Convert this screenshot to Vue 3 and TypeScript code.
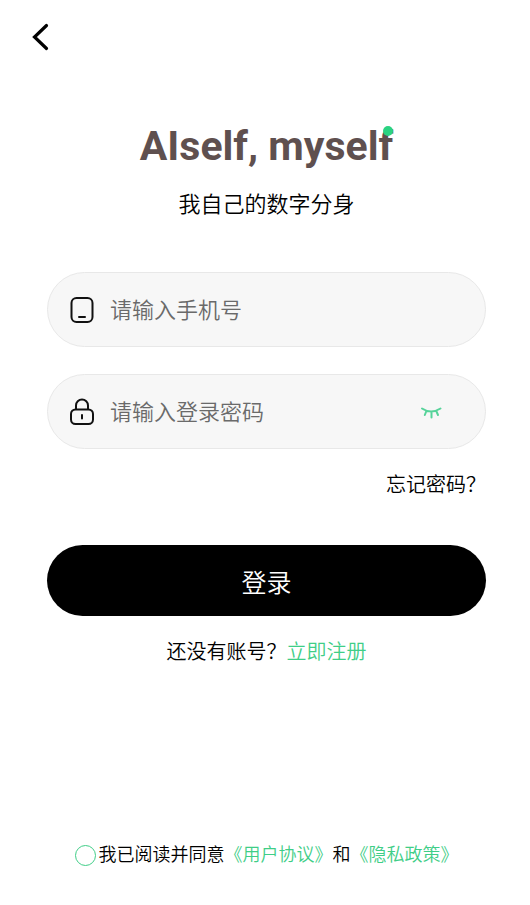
<script setup lang="ts">
import { ref } from 'vue'

const phone = ref('')
const password = ref('')
const showPassword = ref(false)
const agreed = ref(false)
</script>

<template>
  <main class="page">
    <header class="bar">
      <button class="icon-button" type="button" aria-label="返回">
        <svg width="20" height="30" viewBox="0 0 20 30" fill="none" stroke="#000" stroke-width="3.200" stroke-linecap="round" stroke-linejoin="miter">
          <path d="M16.500 3.500 4.500 15 16.500 26.500" />
        </svg>
      </button>
    </header>

    <section class="brand">
      <h1 class="title">AIself, myself<span class="dot"></span></h1>
      <p class="subtitle">我自己的数字分身</p>
    </section>

    <form class="form" @submit.prevent>
      <div class="field">
        <svg class="field-icon" width="26" height="28" viewBox="0 0 26 28" fill="none" stroke="#111" stroke-width="2" stroke-linecap="round">
          <rect x="2.500" y="2" width="21" height="24" rx="5" />
          <path d="M10 21h6" />
        </svg>
        <input v-model="phone" type="tel" placeholder="请输入手机号" aria-label="手机号" />
      </div>

      <div class="field">
        <svg class="field-icon" width="26" height="28" viewBox="0 0 26 28" fill="none" stroke="#111" stroke-width="2" stroke-linecap="round">
          <rect x="2" y="11.500" width="22" height="14.500" rx="4.500" />
          <path d="M7 11V7.500a6 6 0 0 1 12 0V11M13 17v3.500" />
        </svg>
        <input v-model="password" :type="showPassword ? 'text' : 'password'" placeholder="请输入登录密码" aria-label="登录密码" />
        <button class="icon-button" type="button" aria-label="显示密码" @click="showPassword = !showPassword">
          <svg width="22" height="14" viewBox="0 0 22 14" fill="none" stroke="#56d39a" stroke-width="2" stroke-linecap="round">
            <path d="M2 3.500Q11 9.500 20.500 3.500M6.200 6.500 4.800 10M11.500 7v5.500M16.500 6.500 18 10" />
          </svg>
        </button>
      </div>

      <a class="forgot" href="#">忘记密码？</a>
      <button class="submit" type="submit">登录</button>
      <p class="register">还没有账号？<a class="accent" href="#">立即注册</a></p>
    </form>

    <footer class="agreement">
      <input id="agree" v-model="agreed" type="checkbox" />
      <label for="agree">我已阅读并同意</label>
      <a class="accent" href="#">《用户协议》</a>
      <span>和</span>
      <a class="accent" href="#">《隐私政策》</a>
    </footer>
  </main>
</template>

<style>
body {
  margin: 0;
  background: #fff;
}
</style>

<style scoped>
.page {
  box-sizing: border-box;
  min-height: 100vh;
  display: flex;
  flex-direction: column;
  padding: 22px 44px 37px 47px;
  color: #000;
  background: #fff;
  font-family: Roboto, "Noto Sans CJK SC", sans-serif;
  font-weight: 350;
}

a {
  color: inherit;
  text-decoration: none;
}

button,
input {
  font: inherit;
}

.bar {
  display: flex;
  margin-left: -17px;
}

.icon-button {
  display: flex;
  padding: 0;
  border: 0;
  background: none;
  cursor: pointer;
}

.brand {
  display: flex;
  flex-direction: column;
  align-items: center;
  margin-top: 70px;
}

.title {
  position: relative;
  margin: 0;
  color: #5f504f;
  font-size: 41px;
  line-height: 48px;
  font-weight: 700;
}

.dot {
  position: absolute;
  top: 4px;
  right: 0;
  width: 10px;
  height: 10px;
  border-radius: 50%;
  background: #2bd381;
}

.subtitle {
  margin: 18px 0 0;
  font-size: 22px;
  line-height: 34px;
}

.form {
  display: flex;
  flex-direction: column;
  margin-top: 50px;
}

.field {
  box-sizing: border-box;
  height: 75px;
  display: flex;
  align-items: center;
  gap: 15px;
  padding: 0 43px 0 21px;
  border: 1px solid #e8e8e8;
  border-radius: 38px;
  background: #f7f7f7;
}

.field + .field {
  margin-top: 27px;
}

.field-icon {
  flex: none;
}

.field input {
  flex: 1;
  min-width: 0;
  padding: 2px 0 0;
  border: 0;
  outline: 0;
  color: #000;
  background: none;
  font-size: 22px;
  line-height: 32px;
}

.field input::placeholder {
  color: #6a6a6a;
  opacity: 1;
}

.forgot {
  align-self: flex-end;
  margin-top: 20px;
  font-size: 20px;
  line-height: 32px;
}

.submit {
  height: 71px;
  margin-top: 44px;
  padding: 0;
  border: 0;
  border-radius: 36px;
  color: #fff;
  background: #000;
  font-size: 25px;
  cursor: pointer;
}

.register {
  margin: 20px 0 0;
  font-size: 20px;
  line-height: 32px;
  text-align: center;
}

.accent {
  color: #3fce87;
}

.agreement {
  display: flex;
  align-items: center;
  justify-content: center;
  margin-top: auto;
  font-size: 18px;
  line-height: 26px;
}

.agreement input {
  appearance: none;
  box-sizing: border-box;
  flex: none;
  width: 21px;
  height: 21px;
  margin: 0 3px 0 0;
  border: 1px solid #3fce87;
  border-radius: 50%;
}

.agreement input:checked {
  background: #3fce87;
}
</style>
